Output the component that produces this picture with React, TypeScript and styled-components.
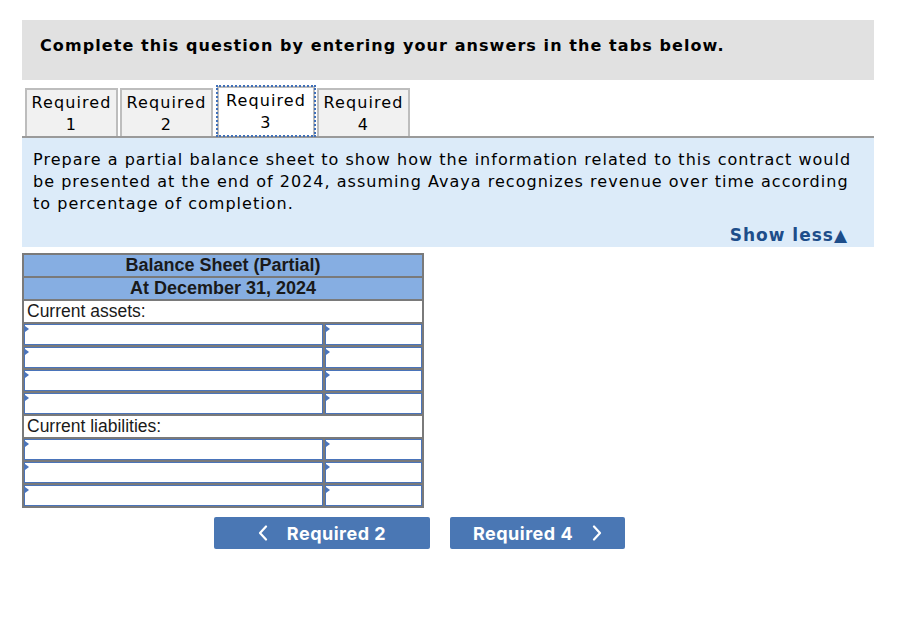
import React, { FC } from 'react';
import styled, { createGlobalStyle } from 'styled-components';

const GlobalStyle = createGlobalStyle`
  body {
    margin: 0;
    background: #ffffff;
    font-family: Verdana, "DejaVu Sans", sans-serif;
    color: #000000;
  }
`;

const Page = styled.div`
  width: 852px;
  padding: 20px 0 0 22px;
`;

const Banner = styled.div`
  height: 60px;
  box-sizing: border-box;
  background: #e1e1e1;
  padding: 16px 0 0 18px;
  font-weight: 700;
  font-size: 16px;
  line-height: 19px;
  letter-spacing: 1.08px;
`;

const TabBar = styled.div`
  display: flex;
  align-items: flex-end;
  gap: 2px;
  margin-top: 6px;
  padding-left: 3px;
  border-bottom: 2px solid #9a9a9a;
`;

const Tab = styled.button<{ $active?: boolean }>`
  width: ${(p) => (p.$active ? '98px' : '93px')};
  height: ${(p) => (p.$active ? '50px' : '48px')};
  margin-left: ${(p) => (p.$active ? '2px' : '0')};
  padding: 2px 0 0;
  background: ${(p) => (p.$active ? '#ffffff' : '#f1f1f1')};
  border: 2px solid #bdbdbd;
  border-bottom: none;
  outline: ${(p) => (p.$active ? '2px dotted #3f6fb8' : 'none')};
  outline-offset: -1px;
  font-family: Verdana, "DejaVu Sans", sans-serif;
  font-size: 16px;
  line-height: 22px;
  letter-spacing: 1.1px;
  color: #000000;
  display: flex;
  flex-direction: column;
  align-items: center;
  justify-content: flex-start;
  cursor: pointer;
`;

const Prompt = styled.div`
  background: #dcebf9;
  padding: 11px 22px 0 11px;
  height: 109px;
  box-sizing: border-box;
  display: flex;
  flex-direction: column;
`;

const PromptText = styled.p`
  margin: 0;
  font-size: 16px;
  line-height: 22px;
  letter-spacing: 1.02px;
  white-space: nowrap;
`;

const ShowLess = styled.a`
  align-self: flex-end;
  margin-top: 10px;
  margin-right: 4px;
  font-weight: 700;
  font-size: 17px;
  letter-spacing: 1px;
  color: #1d4d8a;
  text-decoration: none;
  cursor: pointer;
`;

const Sheet = styled.table`
  margin-top: 6px;
  width: 402px;
  border-collapse: collapse;
  border: 2px solid #7a7a7a;
  font-family: "Liberation Sans", Arial, sans-serif;
  font-size: 18px;
`;

const HeadCell = styled.th`
  background: #86aee2;
  border: 2px solid #7a7a7a;
  height: 21px;
  padding: 0;
  font-weight: 700;
  font-size: 18px;
  line-height: 21px;
  color: #1a1a1a;
  text-align: center;
`;

const LabelCell = styled.td`
  border: 2px solid #7a7a7a;
  height: 21px;
  padding: 0 3px;
  font-size: 17.5px;
  line-height: 21px;
  background: #ffffff;
  color: #1a1a1a;
`;

const InputCell = styled.td<{ $narrow?: boolean }>`
  border: 2px solid #7a7a7a;
  height: 21px;
  padding: 0;
  width: ${(p) => (p.$narrow ? '97px' : 'auto')};
  position: relative;
  background: #ffffff;
`;

const Field = styled.input`
  display: block;
  box-sizing: border-box;
  width: 100%;
  height: 21px;
  margin: 0;
  border: 1px solid #4a74ba;
  background: #ffffff;
  font-family: "Liberation Sans", Arial, sans-serif;
  font-size: 15px;
  outline: none;
`;

const Marker = styled.span`
  position: absolute;
  top: 2px;
  left: 1px;
  width: 0;
  height: 0;
  border-top: 3px solid transparent;
  border-bottom: 3px solid transparent;
  border-left: 4px solid #4a74ba;
  pointer-events: none;
`;

const Nav = styled.div`
  display: flex;
  gap: 20px;
  margin-top: 9px;
  padding-left: 192px;
`;

const NavButton = styled.button<{ $width: number }>`
  width: ${(p) => p.$width}px;
  height: 32px;
  background: #4a77b4;
  border: none;
  border-radius: 2px;
  color: #ffffff;
  font-family: Inter, "Liberation Sans", sans-serif;
  font-weight: 700;
  font-size: 18px;
  letter-spacing: 0.5px;
  display: flex;
  align-items: center;
  justify-content: center;
  gap: 19px;
  cursor: pointer;
`;

const Chevron: FC<{ dir: 'left' | 'right' }> = ({ dir }) => (
  <svg width="10" height="16" viewBox="0 0 10 16" fill="none">
    <path
      d={dir === 'left' ? 'M8 1.5 L2 8 L8 14.5' : 'M2 1.5 L8 8 L2 14.5'}
      stroke="#ffffff"
      strokeWidth="2.2"
      strokeLinecap="round"
      strokeLinejoin="round"
    />
  </svg>
);

const EntryRow: FC = () => (
  <tr>
    <InputCell>
      <Field />
      <Marker />
    </InputCell>
    <InputCell $narrow>
      <Field />
      <Marker />
    </InputCell>
  </tr>
);

const tabs = ['1', '2', '3', '4'];

const App: FC = () => (
  <>
    <GlobalStyle />
    <Page>
      <Banner>Complete this question by entering your answers in the tabs below.</Banner>
      <TabBar>
        {tabs.map((n) => (
          <Tab key={n} $active={n === '3'}>
            <span>Required</span>
            <span>{n}</span>
          </Tab>
        ))}
      </TabBar>
      <Prompt>
        <PromptText>
          Prepare a partial balance sheet to show how the information related to this contract would
          <br />
          be presented at the end of 2024, assuming Avaya recognizes revenue over time according
          <br />
          to percentage of completion.
        </PromptText>
        <ShowLess>Show less▲</ShowLess>
      </Prompt>
      <Sheet>
        <thead>
          <tr>
            <HeadCell colSpan={2}>Balance Sheet (Partial)</HeadCell>
          </tr>
          <tr>
            <HeadCell colSpan={2}>At December 31, 2024</HeadCell>
          </tr>
        </thead>
        <tbody>
          <tr>
            <LabelCell colSpan={2}>Current assets:</LabelCell>
          </tr>
          <EntryRow />
          <EntryRow />
          <EntryRow />
          <EntryRow />
          <tr>
            <LabelCell colSpan={2}>Current liabilities:</LabelCell>
          </tr>
          <EntryRow />
          <EntryRow />
          <EntryRow />
        </tbody>
      </Sheet>
      <Nav>
        <NavButton $width={216}>
          <Chevron dir="left" />
          Required 2
        </NavButton>
        <NavButton $width={175}>
          Required 4
          <Chevron dir="right" />
        </NavButton>
      </Nav>
    </Page>
  </>
);

export default App;
